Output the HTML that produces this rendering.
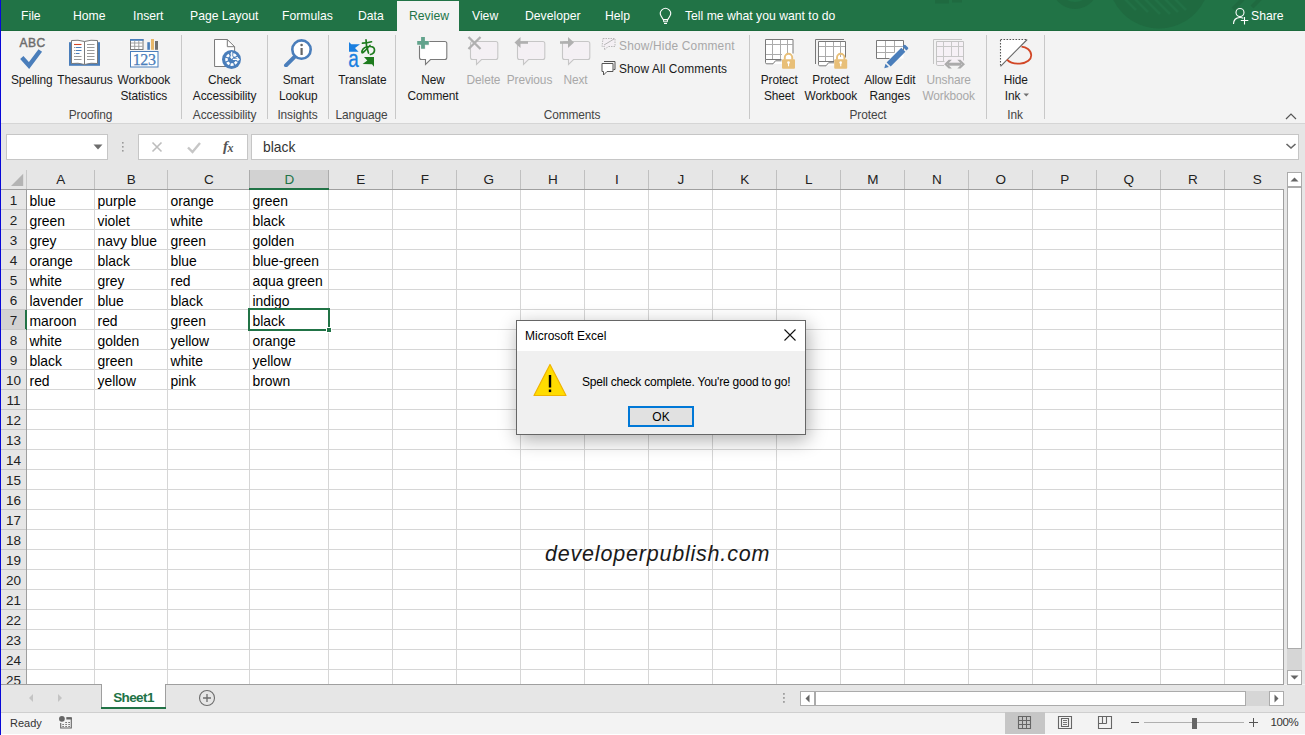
<!DOCTYPE html><html><head><meta charset="utf-8"><style>
*{margin:0;padding:0;box-sizing:border-box}
html,body{width:1305px;height:735px;overflow:hidden;background:#f3f3f3;font-family:"Liberation Sans",sans-serif;position:relative}
.abs{position:absolute}
.t{position:absolute;white-space:nowrap;line-height:1}
.tab{color:#fff;font-size:12.2px;top:10px}
.lbl{font-size:11.6px;color:#262626;letter-spacing:-0.15px}
.dis{color:#a6a6a6}
.grp{font-size:11.6px;color:#444;letter-spacing:-0.15px}
.sep{position:absolute;top:35px;width:1px;height:84px;background:#c8c8c8}
.cell{font-size:13.9px;color:#000}
.ch{font-size:13.5px;color:#222;top:173px}
.rh{font-size:13.5px;color:#222}
</style></head><body>
<div class="abs" style="left:0;top:0;width:1px;height:735px;background:#0808d8;z-index:50"></div>
<div class="abs" style="left:0;top:0;width:1305px;height:31px;background:#217346;overflow:hidden">
<svg class="abs" style="left:0;top:0" width="1305" height="31">
<path d="M935 0h14v3.5h-14zM952 0h10v2.5h-10z" fill="#1f6a40"/>
<circle cx="1075" cy="-14" r="19.5" fill="none" stroke="#1f6a40" stroke-width="7"/>
<circle cx="1159" cy="-22.6" r="51" fill="#1f6a40"/>
<g stroke="#227146" stroke-width="2.6">
<line x1="1120" y1="-6" x2="1136" y2="10"/><line x1="1130" y1="-6" x2="1148" y2="12"/><line x1="1140" y1="-6" x2="1160" y2="14"/><line x1="1150" y1="-6" x2="1170" y2="14"/><line x1="1160" y1="-6" x2="1178" y2="12"/><line x1="1170" y1="-6" x2="1186" y2="10"/>
</g>
<path d="M1233 9L1243 -1M1252 7L1262 -3" stroke="#1f6a40" stroke-width="4"/>
<rect x="0" y="30" width="1305" height="1" fill="#1b6a3c"/>
</svg>
</div>
<div class="abs" style="left:397px;top:1px;width:62px;height:31px;background:#f3f3f3"></div>
<div class="t tab" style="left:21px">File</div>
<div class="t tab" style="left:73px">Home</div>
<div class="t tab" style="left:133px">Insert</div>
<div class="t tab" style="left:190px">Page Layout</div>
<div class="t tab" style="left:282px">Formulas</div>
<div class="t tab" style="left:358px">Data</div>
<div class="t tab" style="left:472px">View</div>
<div class="t tab" style="left:525px">Developer</div>
<div class="t tab" style="left:605px">Help</div>
<div class="t tab" style="left:409px;color:#217346">Review</div>
<svg class="abs" style="left:650px;top:0" width="30" height="31" viewBox="650 0 30 31">
<path d="M663.3 19.6L661.2 16.3A5.1 5.1 0 1 1 669.8 16.3L667.7 19.6z" fill="none" stroke="#fff" stroke-width="1.1"/>
<path d="M663.6 19.6h3.8v2.2h-3.8z" fill="none" stroke="#fff" stroke-width="1"/>
<path d="M664 23.5h3" stroke="#fff" stroke-width="1"/></svg>
<div class="t tab" style="left:685px">Tell me what you want to do</div>
<svg class="abs" style="left:1232px;top:7px" width="18" height="18" viewBox="0 0 18 18">
<circle cx="8" cy="5.5" r="4" fill="none" stroke="#fff" stroke-width="1.1"/>
<path d="M1.5 17c0-4 2.5-6.5 6.5-6.5 1.3 0 2.4.3 3.3.8" fill="none" stroke="#fff" stroke-width="1.1"/>
<path d="M12.5 10v7.5M8.8 13.5h7.5" stroke="#fff" stroke-width="1.1"/></svg>
<div class="t tab" style="left:1251px">Share</div>
<div class="abs" style="left:0;top:123px;width:1305px;height:1px;background:#d5d5d5"></div>
<div class="t" style="left:-68.3px;width:200px;text-align:center;top:74.93px;font-size:11.9px;color:#1a1a1a;letter-spacing:-0.1px">Spelling</div>
<div class="t" style="left:-15px;width:200px;text-align:center;top:74.93px;font-size:11.9px;color:#1a1a1a;letter-spacing:-0.1px">Thesaurus</div>
<div class="t" style="left:43.80000000000001px;width:200px;text-align:center;top:74.93px;font-size:11.9px;color:#1a1a1a;letter-spacing:-0.1px">Workbook</div>
<div class="t" style="left:43.80000000000001px;width:200px;text-align:center;top:90.93px;font-size:11.9px;color:#1a1a1a;letter-spacing:-0.1px">Statistics</div>
<div class="t" style="left:124.6px;width:200px;text-align:center;top:74.93px;font-size:11.9px;color:#1a1a1a;letter-spacing:-0.1px">Check</div>
<div class="t" style="left:124.6px;width:200px;text-align:center;top:90.93px;font-size:11.9px;color:#1a1a1a;letter-spacing:-0.1px">Accessibility</div>
<div class="t" style="left:198.3px;width:200px;text-align:center;top:74.93px;font-size:11.9px;color:#1a1a1a;letter-spacing:-0.1px">Smart</div>
<div class="t" style="left:198.3px;width:200px;text-align:center;top:90.93px;font-size:11.9px;color:#1a1a1a;letter-spacing:-0.1px">Lookup</div>
<div class="t" style="left:262.4px;width:200px;text-align:center;top:74.93px;font-size:11.9px;color:#1a1a1a;letter-spacing:-0.1px">Translate</div>
<div class="t" style="left:333px;width:200px;text-align:center;top:74.93px;font-size:11.9px;color:#1a1a1a;letter-spacing:-0.1px">New</div>
<div class="t" style="left:333px;width:200px;text-align:center;top:90.93px;font-size:11.9px;color:#1a1a1a;letter-spacing:-0.1px">Comment</div>
<div class="t" style="left:383.5px;width:200px;text-align:center;top:74.93px;font-size:11.9px;color:#a8a8a8;letter-spacing:-0.1px">Delete</div>
<div class="t" style="left:429.5px;width:200px;text-align:center;top:74.93px;font-size:11.9px;color:#a8a8a8;letter-spacing:-0.1px">Previous</div>
<div class="t" style="left:475.5px;width:200px;text-align:center;top:74.93px;font-size:11.9px;color:#a8a8a8;letter-spacing:-0.1px">Next</div>
<div class="t" style="left:679.2px;width:200px;text-align:center;top:74.93px;font-size:11.9px;color:#1a1a1a;letter-spacing:-0.1px">Protect</div>
<div class="t" style="left:679.2px;width:200px;text-align:center;top:90.93px;font-size:11.9px;color:#1a1a1a;letter-spacing:-0.1px">Sheet</div>
<div class="t" style="left:730.8px;width:200px;text-align:center;top:74.93px;font-size:11.9px;color:#1a1a1a;letter-spacing:-0.1px">Protect</div>
<div class="t" style="left:730.8px;width:200px;text-align:center;top:90.93px;font-size:11.9px;color:#1a1a1a;letter-spacing:-0.1px">Workbook</div>
<div class="t" style="left:789.8px;width:200px;text-align:center;top:74.93px;font-size:11.9px;color:#1a1a1a;letter-spacing:-0.1px">Allow Edit</div>
<div class="t" style="left:789.8px;width:200px;text-align:center;top:90.93px;font-size:11.9px;color:#1a1a1a;letter-spacing:-0.1px">Ranges</div>
<div class="t" style="left:848.7px;width:200px;text-align:center;top:74.93px;font-size:11.9px;color:#a8a8a8;letter-spacing:-0.1px">Unshare</div>
<div class="t" style="left:848.7px;width:200px;text-align:center;top:90.93px;font-size:11.9px;color:#a8a8a8;letter-spacing:-0.1px">Workbook</div>
<div class="t" style="left:915.8px;width:200px;text-align:center;top:74.93px;font-size:11.9px;color:#1a1a1a;letter-spacing:-0.1px">Hide</div>
<div class="t" style="left:915.8px;width:200px;text-align:center;top:90.93px;font-size:11.9px;color:#1a1a1a;letter-spacing:-0.1px">Ink<svg width="7" height="4" style="margin-left:2.5px;margin-right:-3px;vertical-align:2.5px"><path d="M0.5 0.5h5.5l-2.75 3z" fill="#707070"/></svg></div>
<div class="t" style="left:-9.5px;width:200px;text-align:center;top:110.43px;font-size:11.9px;color:#444;letter-spacing:-0.1px">Proofing</div>
<div class="t" style="left:124.6px;width:200px;text-align:center;top:110.43px;font-size:11.9px;color:#444;letter-spacing:-0.1px">Accessibility</div>
<div class="t" style="left:197.5px;width:200px;text-align:center;top:110.43px;font-size:11.9px;color:#444;letter-spacing:-0.1px">Insights</div>
<div class="t" style="left:261.5px;width:200px;text-align:center;top:110.43px;font-size:11.9px;color:#444;letter-spacing:-0.1px">Language</div>
<div class="t" style="left:472px;width:200px;text-align:center;top:110.43px;font-size:11.9px;color:#444;letter-spacing:-0.1px">Comments</div>
<div class="t" style="left:768px;width:200px;text-align:center;top:110.43px;font-size:11.9px;color:#444;letter-spacing:-0.1px">Protect</div>
<div class="t" style="left:915px;width:200px;text-align:center;top:110.43px;font-size:11.9px;color:#444;letter-spacing:-0.1px">Ink</div>
<div class="t" style="left:619px;top:40.93px;font-size:11.9px;color:#a8a8a8;letter-spacing:0.2px">Show/Hide Comment</div>
<div class="t" style="left:619px;top:63.93px;font-size:11.9px;color:#1a1a1a;letter-spacing:0.1px">Show All Comments</div>
<div class="sep" style="left:181px"></div>
<div class="sep" style="left:267px"></div>
<div class="sep" style="left:328px"></div>
<div class="sep" style="left:395px"></div>
<div class="sep" style="left:749px"></div>
<div class="sep" style="left:986px"></div>
<div class="sep" style="left:1044px"></div>
<svg class="abs" style="left:1284px;top:111px" width="14" height="10"><path d="M2 8l5-5 5 5" fill="none" stroke="#555" stroke-width="1.2"/></svg>
<svg class="abs" style="left:14px;top:34px" width="36" height="38" viewBox="0 0 36 38">
<text x="5.5" y="12.6" font-family="Liberation Sans" font-size="12" fill="#6d6d6d" stroke="#6d6d6d" stroke-width="0.45" letter-spacing="0.5">ABC</text>
<path d="M7.8 23.5l7.2 8 11.3-15" fill="none" stroke="#4a7ebb" stroke-width="4.4"/></svg>
<svg class="abs" style="left:60px;top:34px" width="105" height="36" viewBox="60 34 105 36">
<rect x="69" y="42.2" width="31" height="23.6" fill="#4a7ebb"/>
<path d="M71.5 40.5Q78 39.5 84.5 41.5Q91 39.5 97.5 40.5V63.5Q91 62.5 84.5 64.5Q78 62.5 71.5 63.5z" fill="#fff" stroke="#7a7a7a" stroke-width="1"/>
<path d="M84.5 41.5V64.5" stroke="#7a7a7a" stroke-width="1"/>
<g stroke-width="1.1">
<path d="M74 44.5h7.5" stroke="#d24726"/>
<path d="M74 47.5h1.5M74 50.5h1.5M74 53.5h1.5M74 56.5h7.5M74 59.5h7.5M87 44.5h7.5M87 47.5h7.5M87 50.5h7.5M87 53.5h7.5M87 56.5h7.5M87 59.5h7.5" stroke="#9a9a9a"/>
<path d="M76 47.5h5.5M76 50.5h5.5M76 53.5h3.5" stroke="#4a7ebb"/>
</g>
<rect x="130.5" y="39.5" width="12.5" height="10" fill="#fff" stroke="#777" stroke-width="1"/>
<rect x="130" y="39" width="13.5" height="1.8" fill="#4a7ebb"/>
<path d="M131 43h11.5M131 46.3h11.5M134.7 40.5v8.8M138.8 40.5v8.8" stroke="#9a9a9a" stroke-width="0.9"/>
<rect x="147.3" y="42.2" width="2.6" height="7.6" fill="#4a7ebb"/><rect x="151" y="39" width="3" height="10.8" fill="#e8b86a"/><rect x="155" y="41" width="3" height="8.8" fill="#707070"/>
<rect x="130.5" y="51.5" width="27.5" height="15.5" fill="#fff" stroke="#4a7ebb" stroke-width="1"/>
<text x="144.2" y="65" text-anchor="middle" font-family="Liberation Serif" font-size="16" fill="#4a7ebb" stroke="#4a7ebb" stroke-width="0.25" letter-spacing="-0.3">123</text>
</svg>
<svg class="abs" style="left:212px;top:38px" width="32" height="32" viewBox="0 0 32 32">
<path d="M2.5 1.5h12.8l7.3 7.2v19.8h-20z" fill="#fff" stroke="#7a7a7a" stroke-width="1"/>
<path d="M15.3 1.5v7.2h7.3" fill="none" stroke="#7a7a7a" stroke-width="1"/>
<circle cx="19.5" cy="21.5" r="9.5" fill="#4a7ebb"/>
<circle cx="19.7" cy="21.4" r="5.2" fill="none" stroke="#fff" stroke-width="2.6" stroke-dasharray="2.9 1.2" transform="rotate(-70 19.7 21.4)"/>
<path d="M19.7 13.5v7.5M26.3 21.4h-5.5" stroke="#4a7ebb" stroke-width="2.4"/>
<path d="M19.7 13.8v6.2M20.8 21.4h5.2" stroke="#fff" stroke-width="1.2"/>
<path d="M17.6 18.6l2.1 2.6 2.1-2.6zM25.3 19.3l2.6 2.1-2.6 2.1z" fill="#fff"/></svg>
<svg class="abs" style="left:282px;top:37px" width="34" height="30" viewBox="0 0 34 30">
<circle cx="19.5" cy="12.6" r="9.2" fill="#fff" stroke="#4a7ebb" stroke-width="2.6"/>
<path d="M12.5 19.8L4 28.3" stroke="#4a7ebb" stroke-width="4" stroke-linecap="round"/>
<rect x="18.5" y="11" width="2.2" height="7" fill="#666"/><circle cx="19.6" cy="8" r="1.3" fill="#666"/></svg>
<svg class="abs" style="left:344px;top:35px" width="36" height="35" viewBox="0 0 36 35">
<path d="M5 7.1L7.3 9.3H16L11 13.1L14.5 16.7H5z" fill="#1a7fe0"/>
<path d="M30 22.1V31.7L28 29.3L18.6 29L23.3 25.5L20 22.1z" fill="#1e7b1e"/>
<text x="0" y="0" transform="translate(4.2 31.6) scale(0.82 1)" font-family="Liberation Sans" font-size="23" fill="#1a7fe0" stroke="#1a7fe0" stroke-width="0.3">a</text>
<g fill="none" stroke="#1e7b1e" stroke-width="1.7" stroke-linecap="round">
<path d="M18.5 8.2Q23 8.2 27.5 6.8"/>
<path d="M22 4.8Q22 12 24.5 18"/>
<path d="M26 10.5Q21.5 15.5 19 17.5Q17.5 18.5 18 16Q19.5 11.5 26 11.5Q30.5 11.5 30.5 15Q30.5 18.5 26.5 19.5"/>
</g></svg>
<svg class="abs" style="left:415px;top:35px" width="34" height="32" viewBox="0 0 34 32">
<path d="M6.5 6.5h23.3a2 2 0 0 1 2 2v14a2 2 0 0 1-2 2h-14.3l-5 5v-5h-4a2 2 0 0 1-2-2v-14a2 2 0 0 1 2-2z" fill="#fff" stroke="#7a7a7a" stroke-width="1.1"/>
<path d="M8 1.6v12.6M1.7 7.9h12.6" stroke="#f3f3f3" stroke-width="5.6"/><path d="M8 2.1v11.6M2.2 7.9h11.6" stroke="#62a38c" stroke-width="3.8"/></svg>
<svg class="abs" style="left:466px;top:35px" width="34" height="32" viewBox="0 0 34 32">
<path d="M6.5 6.5h23.3a2 2 0 0 1 2 2v14a2 2 0 0 1-2 2h-14.3l-5 5v-5h-4a2 2 0 0 1-2-2v-14a2 2 0 0 1 2-2z" fill="#f4f0f4" stroke="#c6c6c6" stroke-width="1.1"/>
<path d="M2.5 2l12 12M14.5 2l-12 12" stroke="#b0b0b0" stroke-width="2.3"/></svg>
<svg class="abs" style="left:513px;top:35px" width="34" height="32" viewBox="0 0 34 32">
<path d="M6.5 6.5h23.3a2 2 0 0 1 2 2v14a2 2 0 0 1-2 2h-14.3l-5 5v-5h-4a2 2 0 0 1-2-2v-14a2 2 0 0 1 2-2z" fill="#f4f0f4" stroke="#c6c6c6" stroke-width="1.1"/>
<path d="M3 7.5h12" stroke="#b0b0b0" stroke-width="2.6"/><path d="M1.5 7.5l6-5.5v11z" fill="#b0b0b0"/></svg>
<svg class="abs" style="left:558px;top:35px" width="34" height="32" viewBox="0 0 34 32">
<path d="M6.5 6.5h23.3a2 2 0 0 1 2 2v14a2 2 0 0 1-2 2h-14.3l-5 5v-5h-4a2 2 0 0 1-2-2v-14a2 2 0 0 1 2-2z" fill="#f4f0f4" stroke="#c6c6c6" stroke-width="1.1"/>
<path d="M2 7.5h12" stroke="#b0b0b0" stroke-width="2.6"/><path d="M16 7.5l-6-5.5v11z" fill="#b0b0b0"/></svg>
<svg class="abs" style="left:600px;top:37px" width="17" height="16" viewBox="0 0 17 16">
<path d="M3 1.5h12v8H8l-3.5 3.5V9.5H2z" fill="#f4f0f4" stroke="#b8b8b8" stroke-width="1" stroke-dasharray="1.5 1"/>
<path d="M4 8l10-6" stroke="#b8b8b8" stroke-width="1"/></svg>
<svg class="abs" style="left:600px;top:60px" width="17" height="16" viewBox="0 0 17 16">
<path d="M4 1.5h11v8h-1.5" fill="none" stroke="#555" stroke-width="1"/>
<path d="M2 3.5h11v8H7l-3.5 3.5v-3.5H2z" fill="#fff" stroke="#555" stroke-width="1"/></svg>
<svg class="abs" style="left:0;top:0" width="1305" height="124" viewBox="0 0 1305 124">
<g fill="none" stroke-width="1">
<path d="M765.5 39.5h27.5v24.5h-27.5z" fill="#fff" stroke="none"/>
<path d="M772.5 40v19.5M780.5 40v19.5M787.5 40v14.5M766 44.5h26.5M766 54.5h16" stroke="#ababab"/>
<path d="M781.5 59.5h-16M765.5 59.5V39.5h27.5v14" stroke="#787878"/>
<path d="M765.5 59.5v3a1.3 1.3 0 0 0 1.3 1.3h6.2l2.5-3h6" stroke="#787878"/>
</g>
<path d="M784.8 59.7v-2.2a3.7 3.7 0 0 1 7.4 0v2.2" fill="none" stroke="#e8bf78" stroke-width="1.9"/><rect x="782" y="59.2" width="13" height="9.5" rx="1" fill="#e8bf78"/><circle cx="788.5" cy="62.6" r="1.3" fill="#fff"/><rect x="788" y="62.7" width="1.1" height="3.6" fill="#fff"/>
<g fill="none" stroke-width="1">
<path d="M815.5 64V39.5h28.5" stroke="#787878"/>
<path d="M818.5 41.5h27v24h-27z" fill="#fff" stroke="none"/>
<path d="M825.5 42v19M833.5 42v19M840.5 42v15M819 46.5h26M819 56.5h15" stroke="#ababab"/>
<path d="M818.5 61.5V41.5h27v16" stroke="#787878"/>
<path d="M818.5 61.5h15.5M818.5 61.5v3a1.3 1.3 0 0 0 1.3 1.3h6.2l2.5-3h5.5" stroke="#787878"/>
</g>
<path d="M837.0 59.7v-2.2a3.7 3.7 0 0 1 7.4 0v2.2" fill="none" stroke="#e8bf78" stroke-width="1.9"/><rect x="834.2" y="59.2" width="13" height="9.5" rx="1" fill="#e8bf78"/><circle cx="840.7" cy="62.6" r="1.3" fill="#fff"/><rect x="840.2" y="62.7" width="1.1" height="3.6" fill="#fff"/>
<g fill="none" stroke-width="1">
<path d="M876.5 40.5h27v18h-27z" fill="#fff" stroke="none"/>
<path d="M885.5 41v17M894.5 41v11.5M877 46.5h25.5M877 52.5h17.5" stroke="#ababab"/>
<path d="M889.5 58.5h-13V40.5h27v10" stroke="#787878"/>
</g>
<path d="M884.3 68.3l1.2-4.6 3.4 3.4z" fill="#4a7ebb"/>
<path d="M886.6 62.4l14.7-14.7 4.1 4.1-14.7 14.7z" fill="#4a7ebb"/>
<path d="M902.4 46.6l1.6-1.6a1 1 0 0 1 1.4 0l2.6 2.6a1 1 0 0 1 0 1.4l-1.6 1.6z" fill="#4a7ebb"/>
<g fill="none" stroke-width="1">
<path d="M933.5 64V39.5h28.5" stroke="#c4c4c4"/>
<path d="M936.5 41.5h27v24h-27z" fill="#f6f1f6" stroke="none"/>
<path d="M943.5 42v19M951.5 42v15M958.5 42v15M937 46.5h26M937 56.5h26" stroke="#c8c8c8"/>
<path d="M936.5 61.5h8M944 65.5h-6.2a1.3 1.3 0 0 1-1.3-1.3V41.5h27v19" stroke="#c4c4c4"/>
</g>
<path d="M948 64.2h13" stroke="#ababab" stroke-width="3"/>
<path d="M944.2 64.2l4.5-4.4h3.2l-4.4 4.4 4.4 4.4h-3.2zM965 64.2l-4.5-4.4h-3.2l4.4 4.4-4.4 4.4h3.2z" fill="#ababab"/>
<path d="M1000.5 66.4V39.5H1027z" fill="#fff"/>
<path d="M1000.5 40v26M1000.5 39.5h26.5" stroke="#555" stroke-width="1.1" stroke-dasharray="1.6 1.4" fill="none"/>
<path d="M1000.5 66.4L1027.2 39.5" stroke="#666" stroke-width="1.1"/>
<path d="M1007 59.7C1010 63 1015 64 1020 63.6C1027 63 1031.5 59.5 1031.2 55C1031 50 1026 46.8 1021.5 46.6" fill="none" stroke="#d24726" stroke-width="1.8"/>
</svg>
<div class="abs" style="left:0;top:124px;width:1305px;height:560px;background:#e6e6e6"></div>
<div class="abs" style="left:6px;top:134px;width:102px;height:26px;background:#fff;border:1px solid #c6c6c6"></div>
<svg class="abs" style="left:92px;top:143px" width="12" height="8"><path d="M1.5 1.5h9l-4.5 5z" fill="#6d6d6d"/></svg>
<svg class="abs" style="left:121px;top:140px" width="4" height="14"><rect x="1" y="2" width="1.6" height="1.6" fill="#9a9a9a"/><rect x="1" y="6" width="1.6" height="1.6" fill="#9a9a9a"/><rect x="1" y="10" width="1.6" height="1.6" fill="#9a9a9a"/></svg>
<div class="abs" style="left:138px;top:134px;width:110px;height:26px;background:#fff;border:1px solid #c6c6c6"></div>
<svg class="abs" style="left:150px;top:140px" width="14" height="14"><path d="M2.5 2.5l9 9M11.5 2.5l-9 9" stroke="#bdbdbd" stroke-width="1.6"/></svg>
<svg class="abs" style="left:186px;top:140px" width="16" height="14"><path d="M2 7.5l4.5 4.5 7.5-9" fill="none" stroke="#c6c6c6" stroke-width="2.4"/></svg>
<div class="t" style="left:223px;top:139px;font-family:'Liberation Serif',serif;font-style:italic;font-weight:bold;font-size:15px;color:#555">f<span style="font-size:12px;position:relative;top:0.5px;margin-left:-0.5px">x</span></div>
<div class="abs" style="left:251px;top:134px;width:1048px;height:26px;background:#fff;border:1px solid #c6c6c6"></div>
<div class="t" style="left:263px;top:140.73px;font-size:13.9px;color:#333;">black</div>
<svg class="abs" style="left:1285px;top:142px" width="12" height="9"><path d="M1.5 2l4.5 4 4.5-4" fill="none" stroke="#666" stroke-width="1.6"/></svg>
<div class="abs" style="left:27px;top:190px;width:1256px;height:494px;background:#fff"></div>
<div class="abs" style="left:94px;top:190px;width:1px;height:494px;background:#d6d6d6"></div>
<div class="abs" style="left:167px;top:190px;width:1px;height:494px;background:#d6d6d6"></div>
<div class="abs" style="left:249px;top:190px;width:1px;height:494px;background:#d6d6d6"></div>
<div class="abs" style="left:328px;top:190px;width:1px;height:494px;background:#d6d6d6"></div>
<div class="abs" style="left:392px;top:190px;width:1px;height:494px;background:#d6d6d6"></div>
<div class="abs" style="left:456px;top:190px;width:1px;height:494px;background:#d6d6d6"></div>
<div class="abs" style="left:520px;top:190px;width:1px;height:494px;background:#d6d6d6"></div>
<div class="abs" style="left:584px;top:190px;width:1px;height:494px;background:#d6d6d6"></div>
<div class="abs" style="left:648px;top:190px;width:1px;height:494px;background:#d6d6d6"></div>
<div class="abs" style="left:712px;top:190px;width:1px;height:494px;background:#d6d6d6"></div>
<div class="abs" style="left:776px;top:190px;width:1px;height:494px;background:#d6d6d6"></div>
<div class="abs" style="left:840px;top:190px;width:1px;height:494px;background:#d6d6d6"></div>
<div class="abs" style="left:904px;top:190px;width:1px;height:494px;background:#d6d6d6"></div>
<div class="abs" style="left:968px;top:190px;width:1px;height:494px;background:#d6d6d6"></div>
<div class="abs" style="left:1032px;top:190px;width:1px;height:494px;background:#d6d6d6"></div>
<div class="abs" style="left:1096px;top:190px;width:1px;height:494px;background:#d6d6d6"></div>
<div class="abs" style="left:1160px;top:190px;width:1px;height:494px;background:#d6d6d6"></div>
<div class="abs" style="left:1224px;top:190px;width:1px;height:494px;background:#d6d6d6"></div>
<div class="abs" style="left:27px;top:209px;width:1256px;height:1px;background:#d6d6d6"></div>
<div class="abs" style="left:27px;top:229px;width:1256px;height:1px;background:#d6d6d6"></div>
<div class="abs" style="left:27px;top:249px;width:1256px;height:1px;background:#d6d6d6"></div>
<div class="abs" style="left:27px;top:269px;width:1256px;height:1px;background:#d6d6d6"></div>
<div class="abs" style="left:27px;top:289px;width:1256px;height:1px;background:#d6d6d6"></div>
<div class="abs" style="left:27px;top:309px;width:1256px;height:1px;background:#d6d6d6"></div>
<div class="abs" style="left:27px;top:329px;width:1256px;height:1px;background:#d6d6d6"></div>
<div class="abs" style="left:27px;top:349px;width:1256px;height:1px;background:#d6d6d6"></div>
<div class="abs" style="left:27px;top:369px;width:1256px;height:1px;background:#d6d6d6"></div>
<div class="abs" style="left:27px;top:389px;width:1256px;height:1px;background:#d6d6d6"></div>
<div class="abs" style="left:27px;top:409px;width:1256px;height:1px;background:#d6d6d6"></div>
<div class="abs" style="left:27px;top:429px;width:1256px;height:1px;background:#d6d6d6"></div>
<div class="abs" style="left:27px;top:449px;width:1256px;height:1px;background:#d6d6d6"></div>
<div class="abs" style="left:27px;top:469px;width:1256px;height:1px;background:#d6d6d6"></div>
<div class="abs" style="left:27px;top:489px;width:1256px;height:1px;background:#d6d6d6"></div>
<div class="abs" style="left:27px;top:509px;width:1256px;height:1px;background:#d6d6d6"></div>
<div class="abs" style="left:27px;top:529px;width:1256px;height:1px;background:#d6d6d6"></div>
<div class="abs" style="left:27px;top:549px;width:1256px;height:1px;background:#d6d6d6"></div>
<div class="abs" style="left:27px;top:569px;width:1256px;height:1px;background:#d6d6d6"></div>
<div class="abs" style="left:27px;top:589px;width:1256px;height:1px;background:#d6d6d6"></div>
<div class="abs" style="left:27px;top:609px;width:1256px;height:1px;background:#d6d6d6"></div>
<div class="abs" style="left:27px;top:629px;width:1256px;height:1px;background:#d6d6d6"></div>
<div class="abs" style="left:27px;top:649px;width:1256px;height:1px;background:#d6d6d6"></div>
<div class="abs" style="left:27px;top:669px;width:1256px;height:1px;background:#d6d6d6"></div>
<div class="abs" style="left:249px;top:170px;width:80px;height:19px;background:#d2d2d2"></div>
<div class="abs" style="left:94px;top:170px;width:1px;height:19px;background:#c0c0c0"></div>
<div class="abs" style="left:167px;top:170px;width:1px;height:19px;background:#c0c0c0"></div>
<div class="abs" style="left:249px;top:170px;width:1px;height:19px;background:#c0c0c0"></div>
<div class="abs" style="left:328px;top:170px;width:1px;height:19px;background:#c0c0c0"></div>
<div class="abs" style="left:392px;top:170px;width:1px;height:19px;background:#c0c0c0"></div>
<div class="abs" style="left:456px;top:170px;width:1px;height:19px;background:#c0c0c0"></div>
<div class="abs" style="left:520px;top:170px;width:1px;height:19px;background:#c0c0c0"></div>
<div class="abs" style="left:584px;top:170px;width:1px;height:19px;background:#c0c0c0"></div>
<div class="abs" style="left:648px;top:170px;width:1px;height:19px;background:#c0c0c0"></div>
<div class="abs" style="left:712px;top:170px;width:1px;height:19px;background:#c0c0c0"></div>
<div class="abs" style="left:776px;top:170px;width:1px;height:19px;background:#c0c0c0"></div>
<div class="abs" style="left:840px;top:170px;width:1px;height:19px;background:#c0c0c0"></div>
<div class="abs" style="left:904px;top:170px;width:1px;height:19px;background:#c0c0c0"></div>
<div class="abs" style="left:968px;top:170px;width:1px;height:19px;background:#c0c0c0"></div>
<div class="abs" style="left:1032px;top:170px;width:1px;height:19px;background:#c0c0c0"></div>
<div class="abs" style="left:1096px;top:170px;width:1px;height:19px;background:#c0c0c0"></div>
<div class="abs" style="left:1160px;top:170px;width:1px;height:19px;background:#c0c0c0"></div>
<div class="abs" style="left:1224px;top:170px;width:1px;height:19px;background:#c0c0c0"></div>
<div class="abs" style="left:26px;top:170px;width:1px;height:19px;background:#c8c8c8"></div>
<div class="abs" style="left:249px;top:170px;width:1px;height:19px;background:#acacac"></div>
<div class="abs" style="left:328px;top:170px;width:1px;height:19px;background:#acacac"></div>
<div class="abs" style="left:0;top:189px;width:1284px;height:1px;background:#9f9f9f"></div>
<div class="abs" style="left:249px;top:188px;width:80px;height:2px;background:#217346"></div>
<div class="t" style="left:-39.2px;width:200px;text-align:center;top:173.07px;font-size:13.5px;color:#222;">A</div>
<div class="t" style="left:31.30000000000001px;width:200px;text-align:center;top:173.07px;font-size:13.5px;color:#222;">B</div>
<div class="t" style="left:108.80000000000001px;width:200px;text-align:center;top:173.07px;font-size:13.5px;color:#222;">C</div>
<div class="t" style="left:189.3px;width:200px;text-align:center;top:173.07px;font-size:13.5px;color:#217346;">D</div>
<div class="t" style="left:260.8px;width:200px;text-align:center;top:173.07px;font-size:13.5px;color:#222;">E</div>
<div class="t" style="left:324.8px;width:200px;text-align:center;top:173.07px;font-size:13.5px;color:#222;">F</div>
<div class="t" style="left:388.8px;width:200px;text-align:center;top:173.07px;font-size:13.5px;color:#222;">G</div>
<div class="t" style="left:452.79999999999995px;width:200px;text-align:center;top:173.07px;font-size:13.5px;color:#222;">H</div>
<div class="t" style="left:516.8px;width:200px;text-align:center;top:173.07px;font-size:13.5px;color:#222;">I</div>
<div class="t" style="left:580.8px;width:200px;text-align:center;top:173.07px;font-size:13.5px;color:#222;">J</div>
<div class="t" style="left:644.8px;width:200px;text-align:center;top:173.07px;font-size:13.5px;color:#222;">K</div>
<div class="t" style="left:708.8px;width:200px;text-align:center;top:173.07px;font-size:13.5px;color:#222;">L</div>
<div class="t" style="left:772.8px;width:200px;text-align:center;top:173.07px;font-size:13.5px;color:#222;">M</div>
<div class="t" style="left:836.8px;width:200px;text-align:center;top:173.07px;font-size:13.5px;color:#222;">N</div>
<div class="t" style="left:900.8px;width:200px;text-align:center;top:173.07px;font-size:13.5px;color:#222;">O</div>
<div class="t" style="left:964.8px;width:200px;text-align:center;top:173.07px;font-size:13.5px;color:#222;">P</div>
<div class="t" style="left:1028.8px;width:200px;text-align:center;top:173.07px;font-size:13.5px;color:#222;">Q</div>
<div class="t" style="left:1092.8px;width:200px;text-align:center;top:173.07px;font-size:13.5px;color:#222;">R</div>
<div class="t" style="left:1157.3px;width:200px;text-align:center;top:173.07px;font-size:13.5px;color:#222;">S</div>
<svg class="abs" style="left:10px;top:172px" width="15" height="15"><path d="M13.2 1.8v12.2h-12.2z" fill="#b4b4b4"/></svg>
<div class="abs" style="left:26px;top:190px;width:1px;height:494px;background:#9f9f9f"></div>
<div class="abs" style="left:1px;top:310px;width:25px;height:19px;background:#d2d2d2"></div>
<div class="abs" style="left:25px;top:310px;width:2px;height:20px;background:#217346"></div>
<div class="abs" style="left:1px;top:209px;width:25px;height:1px;background:#c8c8c8"></div>
<div class="t" style="left:-86.5px;width:200px;text-align:center;top:194.07px;font-size:13.5px;color:#222;">1</div>
<div class="abs" style="left:1px;top:229px;width:25px;height:1px;background:#c8c8c8"></div>
<div class="t" style="left:-86.5px;width:200px;text-align:center;top:214.07px;font-size:13.5px;color:#222;">2</div>
<div class="abs" style="left:1px;top:249px;width:25px;height:1px;background:#c8c8c8"></div>
<div class="t" style="left:-86.5px;width:200px;text-align:center;top:234.07px;font-size:13.5px;color:#222;">3</div>
<div class="abs" style="left:1px;top:269px;width:25px;height:1px;background:#c8c8c8"></div>
<div class="t" style="left:-86.5px;width:200px;text-align:center;top:254.07px;font-size:13.5px;color:#222;">4</div>
<div class="abs" style="left:1px;top:289px;width:25px;height:1px;background:#c8c8c8"></div>
<div class="t" style="left:-86.5px;width:200px;text-align:center;top:274.07px;font-size:13.5px;color:#222;">5</div>
<div class="abs" style="left:1px;top:309px;width:25px;height:1px;background:#c8c8c8"></div>
<div class="t" style="left:-86.5px;width:200px;text-align:center;top:294.07px;font-size:13.5px;color:#222;">6</div>
<div class="abs" style="left:1px;top:329px;width:25px;height:1px;background:#c8c8c8"></div>
<div class="t" style="left:-86.5px;width:200px;text-align:center;top:314.07px;font-size:13.5px;color:#222;">7</div>
<div class="abs" style="left:1px;top:349px;width:25px;height:1px;background:#c8c8c8"></div>
<div class="t" style="left:-86.5px;width:200px;text-align:center;top:334.07px;font-size:13.5px;color:#222;">8</div>
<div class="abs" style="left:1px;top:369px;width:25px;height:1px;background:#c8c8c8"></div>
<div class="t" style="left:-86.5px;width:200px;text-align:center;top:354.07px;font-size:13.5px;color:#222;">9</div>
<div class="abs" style="left:1px;top:389px;width:25px;height:1px;background:#c8c8c8"></div>
<div class="t" style="left:-86.5px;width:200px;text-align:center;top:374.07px;font-size:13.5px;color:#222;">10</div>
<div class="abs" style="left:1px;top:409px;width:25px;height:1px;background:#c8c8c8"></div>
<div class="t" style="left:-86.5px;width:200px;text-align:center;top:394.07px;font-size:13.5px;color:#222;">11</div>
<div class="abs" style="left:1px;top:429px;width:25px;height:1px;background:#c8c8c8"></div>
<div class="t" style="left:-86.5px;width:200px;text-align:center;top:414.07px;font-size:13.5px;color:#222;">12</div>
<div class="abs" style="left:1px;top:449px;width:25px;height:1px;background:#c8c8c8"></div>
<div class="t" style="left:-86.5px;width:200px;text-align:center;top:434.07px;font-size:13.5px;color:#222;">13</div>
<div class="abs" style="left:1px;top:469px;width:25px;height:1px;background:#c8c8c8"></div>
<div class="t" style="left:-86.5px;width:200px;text-align:center;top:454.07px;font-size:13.5px;color:#222;">14</div>
<div class="abs" style="left:1px;top:489px;width:25px;height:1px;background:#c8c8c8"></div>
<div class="t" style="left:-86.5px;width:200px;text-align:center;top:474.07px;font-size:13.5px;color:#222;">15</div>
<div class="abs" style="left:1px;top:509px;width:25px;height:1px;background:#c8c8c8"></div>
<div class="t" style="left:-86.5px;width:200px;text-align:center;top:494.07px;font-size:13.5px;color:#222;">16</div>
<div class="abs" style="left:1px;top:529px;width:25px;height:1px;background:#c8c8c8"></div>
<div class="t" style="left:-86.5px;width:200px;text-align:center;top:514.07px;font-size:13.5px;color:#222;">17</div>
<div class="abs" style="left:1px;top:549px;width:25px;height:1px;background:#c8c8c8"></div>
<div class="t" style="left:-86.5px;width:200px;text-align:center;top:534.07px;font-size:13.5px;color:#222;">18</div>
<div class="abs" style="left:1px;top:569px;width:25px;height:1px;background:#c8c8c8"></div>
<div class="t" style="left:-86.5px;width:200px;text-align:center;top:554.07px;font-size:13.5px;color:#222;">19</div>
<div class="abs" style="left:1px;top:589px;width:25px;height:1px;background:#c8c8c8"></div>
<div class="t" style="left:-86.5px;width:200px;text-align:center;top:574.07px;font-size:13.5px;color:#222;">20</div>
<div class="abs" style="left:1px;top:609px;width:25px;height:1px;background:#c8c8c8"></div>
<div class="t" style="left:-86.5px;width:200px;text-align:center;top:594.07px;font-size:13.5px;color:#222;">21</div>
<div class="abs" style="left:1px;top:629px;width:25px;height:1px;background:#c8c8c8"></div>
<div class="t" style="left:-86.5px;width:200px;text-align:center;top:614.07px;font-size:13.5px;color:#222;">22</div>
<div class="abs" style="left:1px;top:649px;width:25px;height:1px;background:#c8c8c8"></div>
<div class="t" style="left:-86.5px;width:200px;text-align:center;top:634.07px;font-size:13.5px;color:#222;">23</div>
<div class="abs" style="left:1px;top:669px;width:25px;height:1px;background:#c8c8c8"></div>
<div class="t" style="left:-86.5px;width:200px;text-align:center;top:654.07px;font-size:13.5px;color:#222;">24</div>
<div class="abs" style="left:1px;top:689px;width:25px;height:1px;background:#c8c8c8"></div>
<div class="t" style="left:-86.5px;width:200px;text-align:center;top:674.07px;font-size:13.5px;color:#222;">25</div>
<div class="t" style="left:29.5px;top:194.73px;font-size:13.9px;color:#000;">blue</div>
<div class="t" style="left:97.5px;top:194.73px;font-size:13.9px;color:#000;">purple</div>
<div class="t" style="left:170.5px;top:194.73px;font-size:13.9px;color:#000;">orange</div>
<div class="t" style="left:252.5px;top:194.73px;font-size:13.9px;color:#000;">green</div>
<div class="t" style="left:29.5px;top:214.73px;font-size:13.9px;color:#000;">green</div>
<div class="t" style="left:97.5px;top:214.73px;font-size:13.9px;color:#000;">violet</div>
<div class="t" style="left:170.5px;top:214.73px;font-size:13.9px;color:#000;">white</div>
<div class="t" style="left:252.5px;top:214.73px;font-size:13.9px;color:#000;">black</div>
<div class="t" style="left:29.5px;top:234.73px;font-size:13.9px;color:#000;">grey</div>
<div class="t" style="left:97.5px;top:234.73px;font-size:13.9px;color:#000;">navy blue</div>
<div class="t" style="left:170.5px;top:234.73px;font-size:13.9px;color:#000;">green</div>
<div class="t" style="left:252.5px;top:234.73px;font-size:13.9px;color:#000;">golden</div>
<div class="t" style="left:29.5px;top:254.73px;font-size:13.9px;color:#000;">orange</div>
<div class="t" style="left:97.5px;top:254.73px;font-size:13.9px;color:#000;">black</div>
<div class="t" style="left:170.5px;top:254.73px;font-size:13.9px;color:#000;">blue</div>
<div class="t" style="left:252.5px;top:254.73px;font-size:13.9px;color:#000;">blue-green</div>
<div class="t" style="left:29.5px;top:274.73px;font-size:13.9px;color:#000;">white</div>
<div class="t" style="left:97.5px;top:274.73px;font-size:13.9px;color:#000;">grey</div>
<div class="t" style="left:170.5px;top:274.73px;font-size:13.9px;color:#000;">red</div>
<div class="t" style="left:252.5px;top:274.73px;font-size:13.9px;color:#000;">aqua green</div>
<div class="t" style="left:29.5px;top:294.73px;font-size:13.9px;color:#000;">lavender</div>
<div class="t" style="left:97.5px;top:294.73px;font-size:13.9px;color:#000;">blue</div>
<div class="t" style="left:170.5px;top:294.73px;font-size:13.9px;color:#000;">black</div>
<div class="t" style="left:252.5px;top:294.73px;font-size:13.9px;color:#000;">indigo</div>
<div class="t" style="left:29.5px;top:314.73px;font-size:13.9px;color:#000;">maroon</div>
<div class="t" style="left:97.5px;top:314.73px;font-size:13.9px;color:#000;">red</div>
<div class="t" style="left:170.5px;top:314.73px;font-size:13.9px;color:#000;">green</div>
<div class="t" style="left:252.5px;top:314.73px;font-size:13.9px;color:#000;">black</div>
<div class="t" style="left:29.5px;top:334.73px;font-size:13.9px;color:#000;">white</div>
<div class="t" style="left:97.5px;top:334.73px;font-size:13.9px;color:#000;">golden</div>
<div class="t" style="left:170.5px;top:334.73px;font-size:13.9px;color:#000;">yellow</div>
<div class="t" style="left:252.5px;top:334.73px;font-size:13.9px;color:#000;">orange</div>
<div class="t" style="left:29.5px;top:354.73px;font-size:13.9px;color:#000;">black</div>
<div class="t" style="left:97.5px;top:354.73px;font-size:13.9px;color:#000;">green</div>
<div class="t" style="left:170.5px;top:354.73px;font-size:13.9px;color:#000;">white</div>
<div class="t" style="left:252.5px;top:354.73px;font-size:13.9px;color:#000;">yellow</div>
<div class="t" style="left:29.5px;top:374.73px;font-size:13.9px;color:#000;">red</div>
<div class="t" style="left:97.5px;top:374.73px;font-size:13.9px;color:#000;">yellow</div>
<div class="t" style="left:170.5px;top:374.73px;font-size:13.9px;color:#000;">pink</div>
<div class="t" style="left:252.5px;top:374.73px;font-size:13.9px;color:#000;">brown</div>
<div class="abs" style="left:248px;top:308px;width:82px;height:23px;border:2px solid #217346"></div>
<div class="abs" style="left:326px;top:327px;width:6px;height:6px;background:#217346;border:1px solid #fff"></div>
<div class="abs" style="left:0;top:684px;width:1284px;height:1px;background:#9f9f9f"></div>
<div class="abs" style="left:1283px;top:190px;width:1px;height:495px;background:#9f9f9f"></div>
<div class="abs" style="left:0;top:685px;width:1305px;height:27px;background:#e6e6e6"></div>
<div class="abs" style="left:1287px;top:172px;width:15px;height:512px;background:#d6d6d6"></div>
<div class="abs" style="left:1287px;top:172px;width:15px;height:15px;background:#fff;border:1px solid #ababab"></div>
<svg class="abs" style="left:1289px;top:175px" width="11" height="9"><path d="M1.5 6.5l4-4 4 4z" fill="#666"/></svg>
<div class="abs" style="left:1287px;top:187px;width:15px;height:462px;background:#fff;border:1px solid #ababab"></div>
<div class="abs" style="left:1287px;top:670px;width:15px;height:15px;background:#fff;border:1px solid #ababab"></div>
<svg class="abs" style="left:1289px;top:673px" width="11" height="9"><path d="M1.5 2.5l4 4 4-4z" fill="#666"/></svg>
<div class="abs" style="left:1px;top:684px;width:100px;height:1px;background:#9f9f9f"></div>
<svg class="abs" style="left:26px;top:691px" width="40" height="14"><path d="M7 3l-4 4 4 4z" fill="#c4c4c4"/><path d="M32 3l4 4-4 4z" fill="#c4c4c4"/></svg>
<div class="abs" style="left:101px;top:684px;width:65px;height:25px;background:#fff;border-left:1px solid #9f9f9f;border-right:1px solid #9f9f9f"></div>
<div class="abs" style="left:101px;top:707px;width:65px;height:2px;background:#217346"></div>
<div class="t" style="left:33.5px;width:200px;text-align:center;top:690.57px;font-size:13.5px;color:#217346;font-weight:bold;letter-spacing:-0.6px">Sheet1</div>
<svg class="abs" style="left:198px;top:689px" width="18" height="18"><circle cx="9" cy="9" r="7.5" fill="none" stroke="#6d6d6d" stroke-width="1.1"/><path d="M9 5v8M5 9h8" stroke="#6d6d6d" stroke-width="1.3"/></svg>
<svg class="abs" style="left:781px;top:692px" width="6" height="12"><rect x="2" y="1" width="1.8" height="1.8" fill="#a0a0a0"/><rect x="2" y="5" width="1.8" height="1.8" fill="#a0a0a0"/><rect x="2" y="9" width="1.8" height="1.8" fill="#a0a0a0"/></svg>
<div class="abs" style="left:800px;top:691px;width:484px;height:15px;background:#d6d6d6"></div>
<div class="abs" style="left:800px;top:691px;width:15px;height:15px;background:#fff;border:1px solid #ababab"></div>
<svg class="abs" style="left:803px;top:693px" width="9" height="11"><path d="M6.5 1.5l-4 4 4 4z" fill="#666"/></svg>
<div class="abs" style="left:815px;top:691px;width:431px;height:15px;background:#fff;border:1px solid #ababab"></div>
<div class="abs" style="left:1269px;top:691px;width:15px;height:15px;background:#fff;border:1px solid #ababab"></div>
<svg class="abs" style="left:1272px;top:693px" width="9" height="11"><path d="M2.5 1.5l4 4-4 4z" fill="#666"/></svg>
<div class="abs" style="left:0;top:712px;width:1305px;height:1px;background:#cfcfcf"></div>
<div class="abs" style="left:0;top:713px;width:1305px;height:21px;background:#f3f3f3"></div>
<div class="abs" style="left:0;top:734px;width:1305px;height:1px;background:#fff"></div>
<div class="t" style="left:10px;top:718.19px;font-size:11px;color:#333;">Ready</div>
<svg class="abs" style="left:50px;top:712px" width="30" height="22" viewBox="50 712 30 22">
<circle cx="61.9" cy="718.8" r="2.9" fill="#666"/>
<path d="M66.3 717.1h5.5v2.4h-5.5z" fill="#666"/>
<path d="M60.7 723v5h10.6v-10" fill="none" stroke="#666" stroke-width="1.1"/>
<g fill="#666"><rect x="65.2" y="721.9" width="1.8" height="1" rx="0.4"/><rect x="68.2" y="721.9" width="1.8" height="1" rx="0.4"/>
<rect x="62.2" y="724" width="1.8" height="1" rx="0.4"/><rect x="65.2" y="724" width="1.8" height="1" rx="0.4"/><rect x="68.2" y="724" width="1.8" height="1" rx="0.4"/>
<rect x="62.2" y="726" width="1.8" height="1" rx="0.4"/><rect x="65.2" y="726" width="1.8" height="1" rx="0.4"/><rect x="68.2" y="726" width="1.8" height="1" rx="0.4"/></g>
</svg>
<div class="abs" style="left:1005px;top:712px;width:40px;height:22px;background:#c6c6c6"></div>
<svg class="abs" style="left:1000px;top:712px" width="120" height="22" viewBox="1000 712 120 22">
<g fill="none" stroke="#666" stroke-width="1.1">
<path d="M1018.5 716.5h12v12h-12z"/><path d="M1022.5 716.5v12M1026.5 716.5v12M1018.5 720.5h12M1018.5 724.5h12" stroke-width="1"/>
<path d="M1058.5 716.5h13v12h-13z"/><path d="M1061.5 718.5h7v8h-7z"/><path d="M1063 720.5h4M1063 722.5h4M1063 724.5h4" stroke-width="0.9"/>
<path d="M1098.5 716.5h13v12h-13z"/><path d="M1098.5 723.5h8M1102.5 716.5v7M1106.5 716.5v7"/>
</g></svg>
<div class="abs" style="left:1131px;top:722px;width:8px;height:1px;background:#555"></div>
<div class="abs" style="left:1144px;top:722px;width:100px;height:1px;background:#b0b0b0"></div>
<div class="abs" style="left:1192px;top:718px;width:5px;height:11px;background:#666"></div>
<div class="abs" style="left:1249px;top:722px;width:9px;height:1px;background:#555"></div>
<div class="abs" style="left:1253px;top:718px;width:1px;height:9px;background:#555"></div>
<div class="t" style="left:1270.5px;top:717.27px;font-size:11.5px;color:#333;letter-spacing:-0.4px">100%</div>
<div class="t" style="left:545px;top:543.5px;font-family:'Liberation Sans',sans-serif;font-style:italic;font-size:21.5px;color:#1a1a1a;letter-spacing:0.8px">developerpublish.com</div>
<div class="abs" style="left:516px;top:320px;width:290px;height:115px;border:1px solid #666;background:#f0f0f0;box-shadow:2px 5px 18px rgba(0,0,0,0.32)"></div>
<div class="abs" style="left:517px;top:321px;width:288px;height:30px;background:#fff"></div>
<div class="t" style="left:525px;top:330.34px;font-size:12px;color:#000;">Microsoft Excel</div>
<svg class="abs" style="left:783px;top:328px" width="14" height="14"><path d="M1.5 1.5l11 11M12.5 1.5l-11 11" stroke="#111" stroke-width="1.1"/></svg>
<svg class="abs" style="left:532px;top:362px" width="36" height="36"><path d="M18 2.5L34 33.5H2z" fill="#ffdc00" stroke="#f0b400" stroke-width="1.2" stroke-linejoin="round"/><rect x="16.8" y="13" width="2.4" height="12.5" fill="#000"/><rect x="16.8" y="27.5" width="2.4" height="2.6" fill="#000"/></svg>
<div class="t" style="left:582px;top:375.84px;font-size:12px;color:#000;letter-spacing:-0.2px">Spell check complete. You're good to go!</div>
<div class="abs" style="left:628px;top:406px;width:66px;height:21px;background:#e1e1e1;border:2px solid #0078d7"></div>
<div class="t" style="left:561px;width:200px;text-align:center;top:411.34px;font-size:12px;color:#000;">OK</div>
</body></html>
